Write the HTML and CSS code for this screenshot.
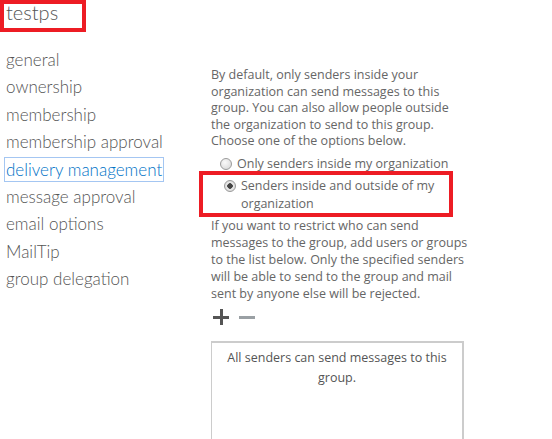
FILE: index.html
```html
<!DOCTYPE html>
<html>
<head>
    <title>testps</title>
    <link rel="stylesheet" href="styles.css">
</head>
<body>
    <div class="title-box">
        <div class="title">testps</div>
    </div>
    <div class="layout">
        <nav class="nav">
            <a class="nav-item">general</a>
            <a class="nav-item">ownership</a>
            <a class="nav-item">membership</a>
            <a class="nav-item">membership approval</a>
            <a class="nav-item active">delivery management</a>
            <a class="nav-item">message approval</a>
            <a class="nav-item">email options</a>
            <a class="nav-item">MailTip</a>
            <a class="nav-item">group delegation</a>
        </nav>
        <main class="pane">
            <p class="text">By default, only senders inside your organization can send messages to this group. You can also allow people outside the organization to send to this group. Choose one of the options below.</p>
            <label class="option">
                <input type="radio" name="senders" class="radio">
                <span>Only senders inside my organization</span>
            </label>
            <label class="option option-marked">
                <input type="radio" name="senders" class="radio" checked>
                <span>Senders inside and outside of my organization</span>
            </label>
            <p class="text">If you want to restrict who can send messages to the group, add users or groups to the list below. Only the specified senders will be able to send to the group and mail sent by anyone else will be rejected.</p>
            <div class="tools">
                <span class="tool tool-add"></span>
                <span class="tool tool-remove"></span>
            </div>
            <div class="list">All senders can send messages to this group.</div>
        </main>
    </div>
</body>
</html>
```

FILE: styles.css
```css
body {
    margin: 0;
    background: #fff;
    font-family: "Segoe UI", "Open Sans", Arial, sans-serif;
    color: #666;
}
.title-box {
    width: 76px;
    height: 24px;
    border: 4px solid #ed1c24;
    padding-left: 2px;
}
.title {
    font-family: "Segoe UI Light", Lato, sans-serif;
    font-size: 20px;
    font-weight: 300;
    line-height: 16px;
    color: #555;
}
.layout {
    display: grid;
    grid-template-columns: 211px 260px;
}
.nav {
    display: flex;
    flex-direction: column;
    align-items: flex-start;
    padding-top: 15px;
    padding-left: 4px;
}
.nav-item {
    font-family: "Segoe UI Light", Lato, sans-serif;
    font-size: 17px;
    font-weight: 300;
    line-height: 23.4px;
    padding: 0 1px;
    margin-bottom: 2px;
    border: 1px solid transparent;
    color: #555;
    cursor: pointer;
}
.nav-item.active {
    color: #0072c6;
    border-color: #a4c6f2;
}
.pane {
    padding-top: 35px;
}
.text {
    margin: 0;
    font-size: 12.5px;
    line-height: 16.5px;
}
.text + .option {
    margin-top: 5px;
}
.option {
    display: flex;
    align-items: flex-start;
    gap: 5px;
    padding-left: 9px;
    font-size: 12.5px;
    line-height: 18px;
}
.option-marked {
    box-sizing: border-box;
    width: 254px;
    height: 46px;
    margin: -2px 0 0 -12px;
    padding: 2px 0 0 21px;
    border: 4px solid #ed1c24;
}
.option-marked + .text {
    line-height: 17px;
}
.radio {
    appearance: none;
    width: 12px;
    height: 12px;
    margin: 3px 0 0;
    border: 1px solid #9a9a9a;
    border-radius: 50%;
    background: radial-gradient(circle at 40% 35%, #fafafa, #d4d4d4);
    flex: none;
}
.radio:checked {
    background: radial-gradient(circle, #444 0 2.5px, #eaeaea 3px, #cfcfcf);
}
.tools {
    display: flex;
    gap: 10px;
    height: 16px;
    margin: 7px 0 0 2px;
}
.tool {
    position: relative;
    width: 16px;
    height: 16px;
}
.tool::before,
.tool::after {
    content: "";
    position: absolute;
    background: #555;
}
.tool::before {
    left: 0;
    top: 7px;
    width: 16px;
    height: 3px;
}
.tool-add::after {
    left: 7px;
    top: 0;
    width: 3px;
    height: 16px;
}
.tool-remove::before {
    background: #9aa0a4;
}
.tool-remove::after {
    display: none;
}
.list {
    margin-top: 16px;
    height: 120px;
    width: 240px;
    border: 2px solid #ccc;
    border-left-width: 1px;
    padding: 5px 5px;
    text-align: center;
    font-size: 12.5px;
    line-height: 20px;
    color: #555;
}
```
